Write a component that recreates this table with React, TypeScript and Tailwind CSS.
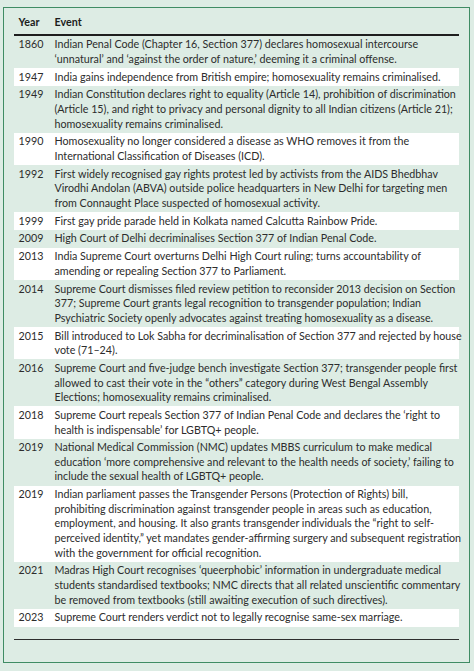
import React from "react";

type Row = { year: string; lines: string[] };

const rows: Row[] = [
  {
    year: "1860",
    lines: [
      "Indian Penal Code (Chapter 16, Section 377) declares homosexual intercourse",
      "\u2018unnatural\u2019 and \u2018against the order of nature,\u2019 deeming it a criminal offense.",
    ],
  },
  {
    year: "1947",
    lines: ["India gains independence from British empire; homosexuality remains criminalised."],
  },
  {
    year: "1949",
    lines: [
      "Indian Constitution declares right to equality (Article 14), prohibition of discrimination",
      "(Article 15), and right to privacy and personal dignity to all Indian citizens (Article 21);",
      "homosexuality remains criminalised.",
    ],
  },
  {
    year: "1990",
    lines: [
      "Homosexuality no longer considered a disease as WHO removes it from the",
      "International Classification of Diseases (ICD).",
    ],
  },
  {
    year: "1992",
    lines: [
      "First widely recognised gay rights protest led by activists from the AIDS Bhedbhav",
      "Virodhi Andolan (ABVA) outside police headquarters in New Delhi for targeting men",
      "from Connaught Place suspected of homosexual activity.",
    ],
  },
  {
    year: "1999",
    lines: ["First gay pride parade held in Kolkata named Calcutta Rainbow Pride."],
  },
  {
    year: "2009",
    lines: ["High Court of Delhi decriminalises Section 377 of Indian Penal Code."],
  },
  {
    year: "2013",
    lines: [
      "India Supreme Court overturns Delhi High Court ruling; turns accountability of",
      "amending or repealing Section 377 to Parliament.",
    ],
  },
  {
    year: "2014",
    lines: [
      "Supreme Court dismisses filed review petition to reconsider 2013 decision on Section",
      "377; Supreme Court grants legal recognition to transgender population; Indian",
      "Psychiatric Society openly advocates against treating homosexuality as a disease.",
    ],
  },
  {
    year: "2015",
    lines: [
      "Bill introduced to Lok Sabha for decriminalisation of Section 377 and rejected by house",
      "vote (71\u201324).",
    ],
  },
  {
    year: "2016",
    lines: [
      "Supreme Court and five-judge bench investigate Section 377; transgender people first",
      "allowed to cast their vote in the \u201cothers\u201d category during West Bengal Assembly",
      "Elections; homosexuality remains criminalised.",
    ],
  },
  {
    year: "2018",
    lines: [
      "Supreme Court repeals Section 377 of Indian Penal Code and declares the \u2018right to",
      "health is indispensable\u2019 for LGBTQ+ people.",
    ],
  },
  {
    year: "2019",
    lines: [
      "National Medical Commission (NMC) updates MBBS curriculum to make medical",
      "education \u2018more comprehensive and relevant to the health needs of society,\u2019 failing to",
      "include the sexual health of LGBTQ+ people.",
    ],
  },
  {
    year: "2019",
    lines: [
      "Indian parliament passes the Transgender Persons (Protection of Rights) bill,",
      "prohibiting discrimination against transgender people in areas such as education,",
      "employment, and housing. It also grants transgender individuals the \u201cright to self-",
      "perceived identity,\u201d yet mandates gender-affirming surgery and subsequent registration",
      "with the government for official recognition.",
    ],
  },
  {
    year: "2021",
    lines: [
      "Madras High Court recognises \u2018queerphobic\u2019 information in undergraduate medical",
      "students standardised textbooks; NMC directs that all related unscientific commentary",
      "be removed from textbooks (still awaiting execution of such directives).",
    ],
  },
  {
    year: "2023",
    lines: ["Supreme Court renders verdict not to legally recognise same-sex marriage."],
  },
];

export default function App() {
  return (
    <div className="w-[474px] h-[671px] bg-[#ddece4] pt-[7px] pl-[3px] font-['Lato',sans-serif] text-[10.72px] leading-[14.6px] text-[#2c2c2c]">
      <div className="w-[467px] h-[656px] border-[1.5px] border-[#3f8c64] pl-[9.5px] pt-[7px]">
        <div className="w-[445px]">
          <div className="flex pb-[4px] border-b-2 border-[#1e1e1e] font-bold text-[#1c1c1c]">
            <div className="w-[41px] pl-[5px] shrink-0">Year</div>
            <div>Event</div>
          </div>
          {rows.map((r, i) => (
            <div
              key={i}
              className={`flex py-[1.6px] ${i % 2 === 1 ? "bg-white" : "bg-[#ddece4]"}`}
            >
              <div className="w-[41px] pl-[5px] shrink-0">{r.year}</div>
              <div>
                {r.lines.map((l, j) => (
                  <div key={j} className="whitespace-nowrap">
                    {l}
                  </div>
                ))}
              </div>
            </div>
          ))}
          <div className="mt-[12px] border-t-[1.5px] border-[#2e2e2e]" />
        </div>
      </div>
    </div>
  );
}
